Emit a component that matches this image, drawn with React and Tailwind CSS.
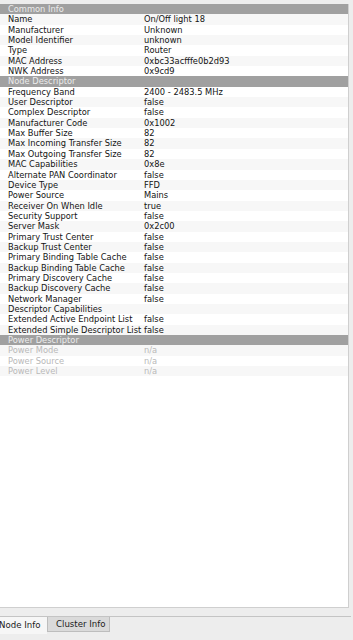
import React from "react";

const sections = [
  {
    title: "Common Info",
    rows: [
      ["Name", "On/Off light 18"],
      ["Manufacturer", "Unknown"],
      ["Model Identifier", "unknown"],
      ["Type", "Router"],
      ["MAC Address", "0xbc33acfffe0b2d93"],
      ["NWK Address", "0x9cd9"],
    ],
  },
  {
    title: "Node Descriptor",
    rows: [
      ["Frequency Band", "2400 - 2483.5 MHz"],
      ["User Descriptor", "false"],
      ["Complex Descriptor", "false"],
      ["Manufacturer Code", "0x1002"],
      ["Max Buffer Size", "82"],
      ["Max Incoming Transfer Size", "82"],
      ["Max Outgoing Transfer Size", "82"],
      ["MAC Capabilities", "0x8e"],
      ["Alternate PAN Coordinator", "false"],
      ["Device Type", "FFD"],
      ["Power Source", "Mains"],
      ["Receiver On When Idle", "true"],
      ["Security Support", "false"],
      ["Server Mask", "0x2c00"],
      ["Primary Trust Center", "false"],
      ["Backup Trust Center", "false"],
      ["Primary Binding Table Cache", "false"],
      ["Backup Binding Table Cache", "false"],
      ["Primary Discovery Cache", "false"],
      ["Backup Discovery Cache", "false"],
      ["Network Manager", "false"],
      ["Descriptor Capabilities", ""],
      ["Extended Active Endpoint List", "false"],
      ["Extended Simple Descriptor List", "false"],
    ],
  },
  {
    title: "Power Descriptor",
    disabled: true,
    rows: [
      ["Power Mode", "n/a"],
      ["Power Source", "n/a"],
      ["Power Level", "n/a"],
    ],
  },
];

export default function App() {
  let idx = 0;
  const lines = [];
  sections.forEach((s) => {
    lines.push(
      <div
        key={"h" + idx}
        className="h-[10.35px] leading-[10.35px] bg-[#a0a0a0] text-[#ececec] pl-[8px] whitespace-nowrap"
      >
        {s.title}
      </div>
    );
    idx++;
    s.rows.forEach((r) => {
      const odd = idx % 2 === 1;
      lines.push(
        <div
          key={"r" + idx}
          className={
            "flex h-[10.35px] leading-[10.35px] whitespace-nowrap " +
            (odd ? "bg-[#f7f7f7] " : "bg-white ") +
            (s.disabled ? "text-[#b9b9b9]" : "text-[#141414]")
          }
        >
          <div className="w-[144px] pl-[8px] shrink-0 overflow-hidden">{r[0]}</div>
          <div className="flex-1">{r[1]}</div>
        </div>
      );
      idx++;
    });
  });

  return (
    <div
      className="w-[353px] h-[640px] bg-[#ededed] flex flex-col overflow-hidden text-[8.3px]"
      style={{ fontFamily: '"DejaVu Sans", sans-serif' }}
    >
      <div className="pt-[4px] pr-[4px] h-[608px] shrink-0">
        <div className="h-full bg-white border-r border-b border-[#cfcfcf]">
          {lines}
        </div>
      </div>
      <div className="mt-[8px] border-t border-[#c4c4c4] flex items-start h-[24px] mr-[2px] text-[8.6px]">
        <div className="h-[17px] w-[48px] bg-[#f6f6f6] leading-[16px] text-[#1a1a1a] -ml-[1px] whitespace-nowrap overflow-hidden">
          Node Info
        </div>
        <div className="h-[15px] w-[63px] bg-[#dadada] border border-t-0 border-[#bdbdbd] leading-[14px] text-[#1a1a1a] pl-[8px] whitespace-nowrap">
          Cluster Info
        </div>
      </div>
    </div>
  );
}
